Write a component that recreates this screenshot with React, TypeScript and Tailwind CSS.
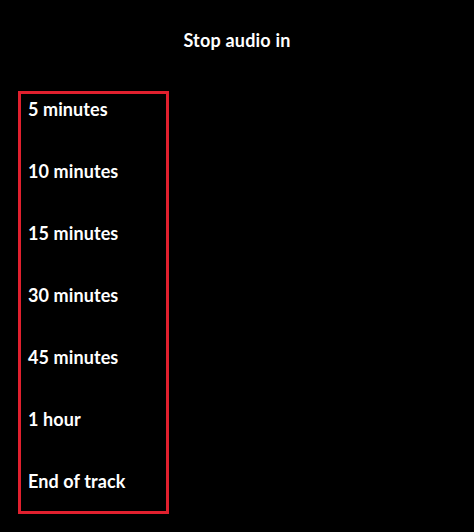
import React from 'react';

const options = ['5 minutes', '10 minutes', '15 minutes', '30 minutes', '45 minutes', '1 hour', 'End of track'];

const App: React.FC = () => {
  return (
    <div
      className="w-[474px] h-[532px] bg-black text-white overflow-hidden"
      style={{ fontFamily: 'Lato, "Noto Sans", sans-serif' }}
    >
      <div className="pt-[28px] h-[24px] box-content flex justify-center">
        <h1 className="text-[18px] leading-[24px] font-bold tracking-[0.2px]">Stop audio in</h1>
      </div>
      <div className="pl-[18px] pt-[39px]">
        <ul className="w-[151px] border-[3px] border-[#e0202e] pt-[5px] pb-[20px] pl-[7px] flex flex-col gap-[42px]">
          {options.map(opt => (
            <li key={opt} className="text-[18px] leading-[20px] font-bold whitespace-nowrap tracking-[0.1px]">
              {opt}
            </li>
          ))}
        </ul>
      </div>
    </div>
  );
};

export default App;
